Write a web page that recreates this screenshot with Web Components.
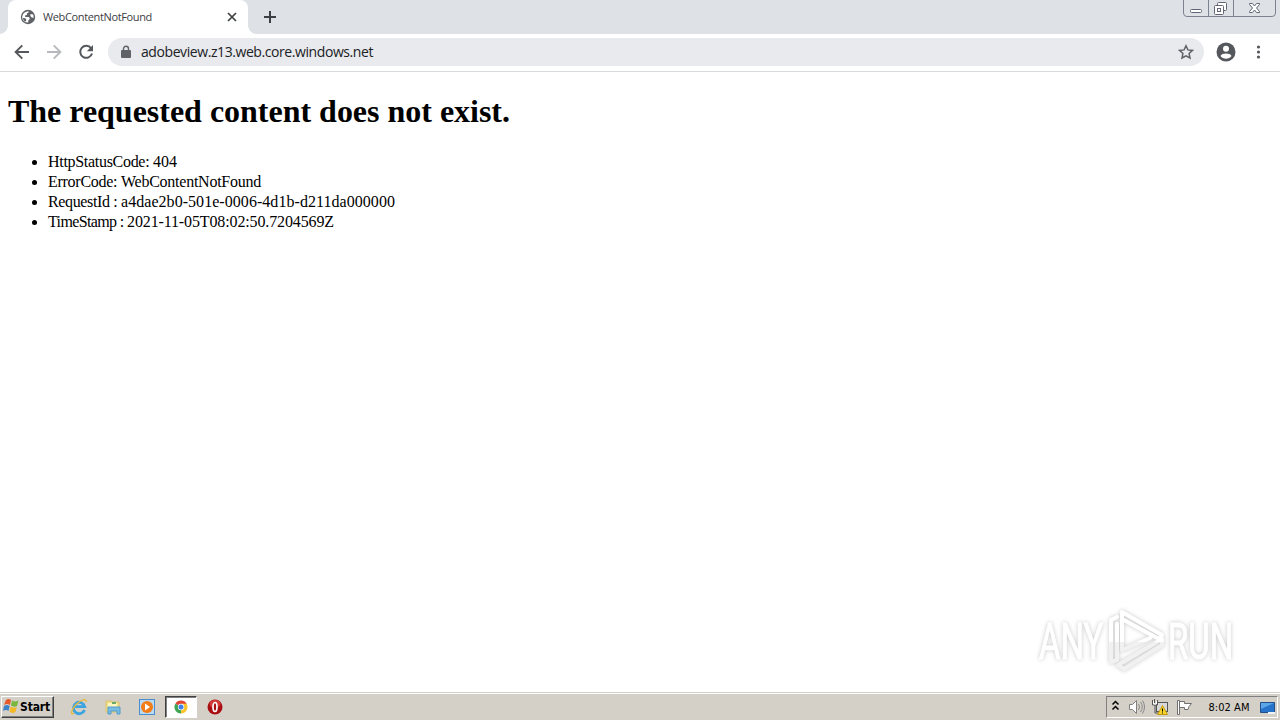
<!DOCTYPE html>
<html lang="en">
<head>
<meta charset="utf-8">
<title>WebContentNotFound</title>
<style>
    html, body { margin: 0; width: 1280px; height: 720px; overflow: hidden; background: #fff; }
</style>
</head>
<body>
<desktop-screen></desktop-screen>
<script>
class BaseElement extends HTMLElement {
    constructor() {
        super();
        this.attachShadow({ mode: 'open' });
        this.shadowRoot.innerHTML = `<style>:host { display: block; box-sizing: border-box; } svg { display: block; } ${this.styles()}</style>${this.markup()}`;
    }
    styles() { return ''; }
    markup() { return ''; }
}

// Spreads its text over a given width with letter-spacing
class FitText extends BaseElement {
    styles() { return ':host { display: inline-block; white-space: pre; }'; }
    markup() { return '<slot></slot>'; }
    connectedCallback() {
        const natural = this.getBoundingClientRect().width;
        const wanted = Number(this.getAttribute('width'));
        if (!natural || !wanted) return;
        this.style.letterSpacing = (wanted - natural) / this.textContent.length + 'px';
    }
}

class WindowControls extends BaseElement {
    styles() {
        return `
            :host { width: 93px; height: 17px; }
        `;
    }
    markup() {
        return `
            <svg width="93" height="17" fill="none" stroke="#7d8291">
                <path d="M.5 0V13Q.5 16.500 4 16.500H89Q92.500 16.500 92.500 13V0M25.500 0V16.500M50.500 0V16.500"/>
                <rect x="7.500" y="9.500" width="11" height="3" rx="1" fill="#fff" stroke="#636775"/>
                <g stroke="#636775" fill="#fff">
                    <rect x="34.500" y="2.500" width="9" height="8" rx="1"/>
                    <rect x="31.500" y="5.500" width="9" height="9" rx="1"/>
                    <rect x="34.500" y="8.500" width="3" height="3"/>
                </g>
                <path d="M66.500 3.500h3l2 2.500 2-2.500h3v1l-3 3.500 3 3.500v1h-3l-2-2.500-2 2.500h-3v-1l3-3.500-3-3.500z" fill="#fff" stroke="#636775"/>
            </svg>
        `;
    }
}

class TabStrip extends BaseElement {
    styles() {
        return `
            :host { display: flex; height: 34px; background: #dee1e6; font: 11px "Open Sans", "Noto Sans", sans-serif; color: #3c4043; }
            .corner { width: 8px; height: 8px; align-self: flex-end; background: radial-gradient(circle at 0 0, #dee1e6 7.500px, #fff 8px); }
            .corner.right { background: radial-gradient(circle at 100% 0, #dee1e6 7.500px, #fff 8px); }
            .tab { display: flex; align-items: center; width: 240px; box-sizing: border-box; padding: 0 10px 0 12px; background: #fff; border-radius: 8px 8px 0 0; }
            .title { flex: 1; padding-left: 7px; line-height: 16px; }
            .plus { margin: 9px 0 0 6px; }
            window-controls { margin: 0 4px 0 auto; }
        `;
    }
    markup() {
        return `
            <div class="corner"></div>
            <div class="tab">
                <svg width="16" height="16" viewBox="0 0 16 16">
                    <circle cx="8" cy="8" r="7.200" fill="#5f6368"/>
                    <path d="M2.200 9C2 5.500 4.500 2.500 8.500 2.300c.6 1-.2 1.700-1.500 2L7 5.700 5.200 6.600v1.300h3.600l1.200 1.800-1.500 1.200-.4 2.600C5.500 13.700 2.800 12 2.200 9zM10.500 5l2.700.5.6 3.300-2-.2-1.500-1.600z" fill="#fff"/>
                    <path d="M2.800 9l2.600.3 1 1.700-.8 1.500C4 12 3 10.500 2.800 9z" fill="#5f6368"/>
                </svg>
                <span class="title"><fit-text width="109">WebContentNotFound</fit-text></span>
                <svg width="12" height="12" stroke="#3c4043" stroke-width="1.700"><path d="M2 2l8 8M10 2l-8 8"/></svg>
            </div>
            <div class="corner right"></div>
            <svg class="plus" width="16" height="16" stroke="#3c4043" stroke-width="2"><path d="M8 2v12M2 8h12"/></svg>
            <window-controls></window-controls>
        `;
    }
}

class AddressBar extends BaseElement {
    styles() {
        return `
            :host { display: flex; align-items: center; height: 38px; padding: 0 14px 1px; border-bottom: 1px solid #d9dadc; background: #fff; }
            .nav { display: flex; gap: 16px; }
            .omnibox { display: flex; align-items: center; flex: 1; height: 28px; box-sizing: border-box; margin: 0 12px 0 14px; padding: 0 10px 0 13px; border-radius: 14px; background: #e8eaed; color: #202124; font: 14px "Open Sans", "Noto Sans", sans-serif; }
            .url { flex: 1; margin-left: 10px; line-height: 20px; }
            .menu { margin-left: 14px; }
        `;
    }
    markup() {
        return `
            <div class="nav">
                <svg width="16" height="16" fill="none" stroke="#54575b" stroke-width="1.900"><path d="M15 8H2M8.300 1.300L1.600 8l6.700 6.700"/></svg>
                <svg width="16" height="16" fill="none" stroke="#b7b9bc" stroke-width="1.900"><path d="M1 8h13M7.700 1.300L14.400 8l-6.700 6.700"/></svg>
                <svg width="16" height="16" fill="none"><path d="M13.100 4.300A6 6 0 1 0 14 9.500" stroke="#54575b" stroke-width="2"/><path d="M15 1v6.200H8.800z" fill="#54575b"/></svg>
            </div>
            <div class="omnibox">
                <svg width="10" height="14"><path d="M2.500 6V3.800a2.500 2.500 0 0 1 5 0V6" fill="none" stroke="#5f6368" stroke-width="1.400"/><rect y="5" width="10" height="8" rx="1" fill="#5f6368"/></svg>
                <span class="url"><fit-text width="232">adobeview.z13.web.core.windows.net</fit-text></span>
                <svg width="16" height="16" viewBox="0 0 16 16"><path d="M8 1.800l1.900 4.100 4.500.5-3.300 3.100.9 4.500L8 11.800 4 14l.9-4.500L1.600 6.400l4.500-.5z" fill="none" stroke="#5f6368" stroke-width="1.500"/></svg>
            </div>
            <svg width="20" height="20"><circle cx="10" cy="10" r="9.500" fill="#54575b"/><circle cx="10" cy="6.700" r="3" fill="#fff"/><path d="M4.500 14C5.500 10.700 14.500 10.700 15.500 14 13 17.700 7 17.700 4.500 14z" fill="#fff"/></svg>
            <svg class="menu" width="16" height="16" fill="#54575b"><circle cx="8.500" cy="3" r="1.600"/><circle cx="8.500" cy="8" r="1.600"/><circle cx="8.500" cy="13" r="1.600"/></svg>
        `;
    }
}

class ErrorPage extends BaseElement {
    styles() {
        return `
            :host { flex: 1; padding: 20px 8px; background: #fff; color: #000; font: 16px/20px "Liberation Serif", serif; }
            h1 { margin: 0 0 22px; font-size: 32px; line-height: 38px; }
            ul { margin: 0; padding-left: 40px; }
            li { height: 20px; }
        `;
    }
    markup() {
        return `
            <h1><fit-text width="502">The requested content does not exist.</fit-text></h1>
            <ul>
                <li><fit-text width="105">HttpStatusCode: </fit-text><fit-text width="24">404</fit-text></li>
                <li><fit-text width="73">ErrorCode: </fit-text><fit-text width="140">WebContentNotFound</fit-text></li>
                <li><fit-text width="73">RequestId : </fit-text><fit-text width="274">a4dae2b0-501e-0006-4d1b-d211da000000</fit-text></li>
                <li><fit-text width="79">TimeStamp : </fit-text><fit-text width="207">2021-11-05T08:02:50.7204569Z</fit-text></li>
            </ul>
        `;
    }
}

class WaterMark extends BaseElement {
    styles() {
        return `
            :host { position: absolute; left: 1021px; top: 600px; }
            svg { filter: drop-shadow(0 0 2px rgba(0, 0, 0, .22)); }
        `;
    }
    markup() {
        return `
            <svg width="259" height="90" font-family="Roboto, sans-serif" font-size="50">
                <defs>
                    <linearGradient id="shade" gradientUnits="userSpaceOnUse" x1="0" y1="0" x2="0" y2="80">
                        <stop offset=".52" stop-color="#fff"/>
                        <stop offset=".53" stop-color="#f1f1f1"/>
                    </linearGradient>
                </defs>
                <g fill="url(#shade)" stroke="url(#shade)">
                    <text transform="translate(18 59) scale(.67 1)" textLength="96" lengthAdjust="spacingAndGlyphs">ANY</text>
                    <text transform="translate(147 59) scale(.64 1)" textLength="102" lengthAdjust="spacingAndGlyphs">RUN</text>
                </g>
                <g fill="none" stroke="url(#shade)" stroke-width="4" stroke-linejoin="round" stroke-linecap="round">
                    <path d="M101 50V12L141 35L138 39L101 19M101 50L129 38"/>
                    <path d="M96 17L90 20V62L96 60V24M97 65L103 69L141 45V39L97 65"/>
                </g>
            </svg>
        `;
    }
}

class StartButton extends BaseElement {
    styles() {
        return `
            :host { display: flex; align-items: center; width: 53px; height: 22px; border: 1px solid; border-color: #fff #404040 #404040 #fff; box-shadow: inset -1px -1px #808080; font: bold 12px "DejaVu Sans Condensed", "DejaVu Sans", sans-serif; color: #000; }
            svg { margin: -2px 0 0 1px; }
            fit-text { margin: -1px 0 0 1px; }
        `;
    }
    markup() {
        return `
            <svg width="16" height="16">
                <path d="M3 2Q6 0 8 2L7 7Q4 5 1 7z" fill="#e5592b"/>
                <path d="M9 2.500Q12 4.500 15.500 2.500L14 8Q11 9.500 8 7.500z" fill="#79b83c"/>
                <path d="M1 8Q4 6 6.700 8L5.500 13Q3 11 0 13z" fill="#3e83c9"/>
                <path d="M7.700 8.500Q10.500 10.500 13.800 9L12.500 14Q9 16 6.500 13.500z" fill="#f3b929"/>
            </svg>
            <fit-text width="30">Start</fit-text>
        `;
    }
}

class QuickLaunch extends BaseElement {
    styles() {
        return `
            :host { display: flex; align-items: center; height: 24px; margin-left: 8px; }
            .slot { display: flex; align-items: center; justify-content: center; width: 34px; height: 22px; box-sizing: border-box; }
            .active { width: 32px; margin: 0 1px; background: #fff; border: 1px solid; border-color: #404040 #fff #fff #404040; box-shadow: inset 1px 1px #808080; }
        `;
    }
    markup() {
        return `
            <div class="slot"><svg width="18" height="18">
                <path d="M14.500 12A5.700 5.700 0 1 1 14.700 8.700H4" fill="none" stroke="#3ba3df" stroke-width="2.800"/>
                <path d="M4 15C0 18 1 12 6 6.500 11 1.500 17 0 16 4" fill="none" stroke="#e8b83d" stroke-width="1.400"/>
            </svg></div>
            <div class="slot"><svg width="18" height="18">
                <path d="M2 3h5l1 1h7v10H2z" fill="#f0dd8a" stroke="#dcc36c"/>
                <path d="M4 5h9v4H4z" fill="#fff7bf"/><path d="M8 4h4v2H8z" fill="#69aa66"/>
                <path d="M4 9h12v7h-3v-3H7v3H4z" fill="#79bce2" stroke="#4f9dcc"/>
            </svg></div>
            <div class="slot"><svg width="18" height="18">
                <rect x="1.500" y="1.500" width="15" height="15" fill="#bad9f2" stroke="#4b8dcc"/>
                <circle cx="9" cy="9" r="6" fill="#f27d16"/><path d="M7 5.500v7l5-3.500z" fill="#fff"/>
            </svg></div>
            <div class="slot active"><svg width="16" height="16">
                <path d="M8 8L2.370 4.750A6.500 6.500 0 0 1 13.630 4.750z" fill="#e14436"/>
                <path d="M8 8V4.750H13.630A6.500 6.500 0 0 1 8 14.500z" fill="#f7c62f"/>
                <path d="M8 8V14.500A6.500 6.500 0 0 1 2.370 4.750z" fill="#3ca353"/>
                <circle cx="8" cy="8" r="3.200" fill="#fff"/><circle cx="8" cy="8" r="2.500" fill="#3f7fe8"/>
            </svg></div>
            <div class="slot"><svg width="16" height="16">
                <circle cx="8" cy="8" r="7.500" fill="#a90f12"/><ellipse cx="8" cy="5" rx="5.500" ry="4" fill="#d33a37"/>
                <ellipse cx="8" cy="8" rx="2" ry="4.500" fill="#a90f12" stroke="#fff" stroke-width="1.700"/>
            </svg></div>
        `;
    }
}

class SystemTray extends BaseElement {
    styles() {
        return `
            :host { display: flex; align-items: center; width: 172px; height: 22px; margin-left: auto; padding-left: 4px; border: 1px solid; border-color: #808080 #fff #fff #808080; font: 11px "DejaVu Sans Condensed", "DejaVu Sans", sans-serif; color: #000; }
            .clock { margin: 0 10px 0 16px; }
        `;
    }
    markup() {
        return `
            <svg width="9" height="14" style="margin-top:-2px" fill="none" stroke="#000" stroke-width="1.500"><path d="M1.500 5.500l3-3 3 3M1.500 10.500l3-3 3 3"/></svg>
            <svg width="18" height="18" style="margin-left:8px" fill="none" stroke="#808080">
                <path d="M1.500 6.500h3l4-4v13l-4-4h-3z" fill="#fff"/><path d="M10.500 6q2 3 0 6M12.500 4q3.500 5 0 10M14.500 2.500q4 6.500 0 13" stroke="#888"/>
            </svg>
            <svg width="18" height="18" style="margin-left:6px" fill="none" stroke="#555">
                <rect x="5.500" y="4.500" width="11" height="9" fill="#d8d8d8"/><path d="M7 14.500h7"/>
                <path d="M1.500 2v5h5V2M3.500 1v4M4 7v8h3" stroke="#555"/><path d="M2.500 3v3h3V3" stroke="#fff"/>
                <path d="M11.500 7.500l5 9h-10z" fill="#f7d52b" stroke="#c49b10"/><path d="M11.500 10.500v3M11.500 14.500v1" stroke="#000"/>
            </svg>
            <svg width="18" height="18" style="margin-left:6px" fill="#fff" stroke="#707070">
                <path d="M2.500 2.500h2v14h-2zM4.500 3.500h5v2h7l-2.500 3-1 3H9.500v-2h-5z"/>
            </svg>
            <div class="clock"><fit-text width="41">8:02 AM</fit-text></div>
            <svg width="18" height="16">
                <path d="M1.500 3.500h14v10h-14z" fill="#2673c9" stroke="#225088"/><path d="M2 4h13L2 10z" fill="#5ca5e8"/>
                <path d="M9 13h7v2H9z" fill="#eef3f8"/>
            </svg>
        `;
    }
}

class TaskBar extends BaseElement {
    styles() {
        return `
            :host { display: flex; align-items: center; height: 28px; padding: 2px 2px 0 1px; background: linear-gradient(#d4d0c8 1px, #fff 1px 2px, #d4d0c8 2px); }
        `;
    }
    markup() {
        return '<start-button></start-button><quick-launch></quick-launch><system-tray></system-tray>';
    }
}

class DesktopScreen extends BaseElement {
    styles() { return ':host { display: flex; flex-direction: column; width: 1280px; height: 720px; position: relative; }'; }
    markup() {
        return `
            <tab-strip></tab-strip>
            <address-bar></address-bar>
            <error-page></error-page>
            <task-bar></task-bar>
            <water-mark></water-mark>
        `;
    }
}

customElements.define('fit-text', FitText);
customElements.define('window-controls', WindowControls);
customElements.define('tab-strip', TabStrip);
customElements.define('address-bar', AddressBar);
customElements.define('error-page', ErrorPage);
customElements.define('water-mark', WaterMark);
customElements.define('start-button', StartButton);
customElements.define('quick-launch', QuickLaunch);
customElements.define('system-tray', SystemTray);
customElements.define('task-bar', TaskBar);
customElements.define('desktop-screen', DesktopScreen);
</script>
</body>
</html>
